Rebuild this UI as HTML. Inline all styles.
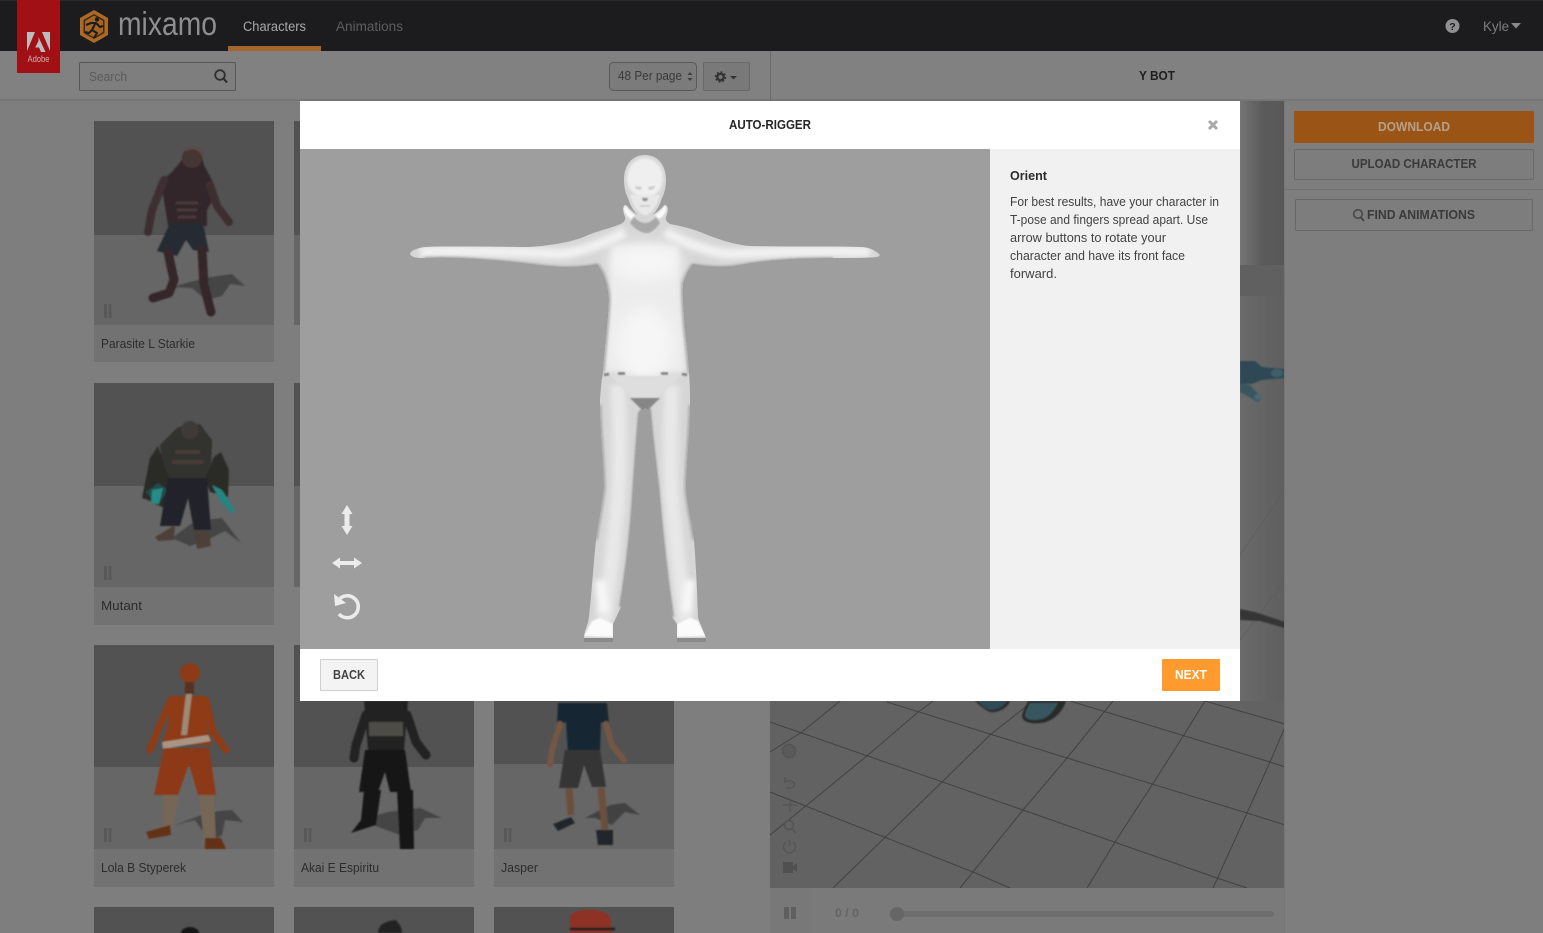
<!DOCTYPE html>
<html><head><meta charset="utf-8"><title>Mixamo Auto-Rigger</title>
<style>
html,body{margin:0;padding:0;width:1543px;height:933px;overflow:hidden;background:#808080}
svg{display:block;position:absolute;left:0;top:0}
text{font-family:"Liberation Sans",sans-serif}
</style></head><body>
<svg width="1543" height="933" viewBox="0 0 1543 933" xmlns="http://www.w3.org/2000/svg">
<defs>
<linearGradient id="vtop" gradientUnits="userSpaceOnUse" x1="1240" x2="1285" y1="0" y2="0"><stop offset="0" stop-color="#747474"/><stop offset=".5" stop-color="#5b5b5b"/><stop offset="1" stop-color="#585858"/></linearGradient>
<linearGradient id="vmid" gradientUnits="userSpaceOnUse" x1="1240" x2="1285" y1="0" y2="0"><stop offset="0" stop-color="#6a6a6a"/><stop offset="1" stop-color="#5e5e5e"/></linearGradient>
<filter id="b1" filterUnits="userSpaceOnUse" x="0" y="0" width="1543" height="933"><feGaussianBlur stdDeviation=".8"/></filter>
<filter id="b15" filterUnits="userSpaceOnUse" x="0" y="0" width="1543" height="933"><feGaussianBlur stdDeviation="1.4"/></filter>
<filter id="b2" filterUnits="userSpaceOnUse" x="0" y="0" width="1543" height="933"><feGaussianBlur stdDeviation="3"/></filter>
<filter id="b3" filterUnits="userSpaceOnUse" x="0" y="0" width="1543" height="933"><feGaussianBlur stdDeviation="8"/></filter>
<path id="bodyshape" d="M645 155C632 155 624 165 624 180C624 186 625 192 628 198C630 205 634 212 638 215C632 212 628 207 626 205C622 206 623 212 625 217C626 220 624 222 621 224C608 229 594 232 586 236C570 243 545 246 530 247C500 247 450 246 425 247C418 248 411 250 410 254C412 258 418 258 424 258C455 256 500 260 540 265C565 268 585 267 597 264C604 272 608 285 609 298C609 315 605 345 603 372C601 385 600 395 600 405C600 430 604 465 604 487C603 500 599 520 596 540C593 570 591 600 589 617C588 625 584 632 584 638V642H613V624L621 607C627 570 632 530 634 493C636 465 638 435 640 413L645 408L649 410C651 435 655 465 658 493C661 530 666 575 672 617L677 624V642H706V638C703 630 699 622 698 617C697 590 696 565 694 540C691 520 686 500 686 487C686 465 690 430 690 405C690 395 690 385 689 373C688 350 684 330 684 317C683 305 682 295 683 283C686 275 689 268 693 264C710 267 722 267 733 266C770 259 800 258 833 258C850 258 865 258 877 257C880 257 880 254 879 254C875 250 868 247 860 247C830 246 790 247 750 246C730 244 715 238 700 232C690 228 680 226 670 224C667 222 665 220 666 217C668 212 669 206 665 205C663 207 658 212 652 215C656 212 660 205 662 198C665 192 666 186 666 180C666 165 658 155 645 155Z"/>
<clipPath id="body"><use href="#bodyshape"/></clipPath>
</defs>

<!-- page -->
<rect width="1543" height="933" fill="#7e7e7e"/>

<!-- viewport -->
<rect x="770" y="101" width="515" height="832" fill="#626262"/>
<rect x="1240" y="101" width="45" height="165" fill="url(#vtop)"/>
<rect x="1240" y="265" width="45" height="31" fill="#606060"/>
<rect x="1240" y="296" width="45" height="405" fill="url(#vmid)"/>
<g stroke="#424242" stroke-width="1" fill="none">
<path d="M770 722L1023 810 1217 878 1247 888M770 792L973 872 1010 888M887 702L1067 758 1247 813 1285 825M1070 701L1270 762 1285 767M1205 701L1285 724"/>
<path d="M833 888L942 782 990 735 1033 701M960 888L1023 810 1067 758 1113 701M1087 888L1115 842 1152 785 1182 738 1205 701M1213 888L1247 813 1270 762 1285 727M770 835L807 805 868 755 917 713 933 701M770 752L802 732 840 701"/>
</g>
<g stroke="#5c5c5c" stroke-width="1" fill="none" opacity=".7"><path d="M1240 555L1285 490M1240 640L1285 580"/></g>
<path d="M1240 609L1255 612 1285 622V628L1260 621 1240 620Z" fill="#363636" filter="url(#b1)"/>
<g filter="url(#b1)">
<path d="M1240 361H1255L1262 367 1285 369V378L1262 380 1252 384 1240 384Z" fill="#2f4a55"/>
<path d="M1240 384L1250 385 1262 398 1258 402 1240 392Z" fill="#385460"/>
<ellipse cx="1277" cy="373" rx="6" ry="4" fill="#3f5e69"/>
<ellipse cx="1258" cy="397" rx="4" ry="3" fill="#4a6873"/>
<path d="M975 701H1010C1008 708 998 713 990 712 984 709 979 705 975 701Z" fill="#2c2c2c"/>
<path d="M978 701H1007C1004 707 996 710 990 710 985 708 981 705 978 701Z" fill="#2f4b56"/>
<path d="M1028 701H1066C1064 708 1058 718 1046 722 1035 725 1022 723 1022 716 1023 710 1026 706 1028 701Z" fill="#2c2c2c"/>
<path d="M1030 703H1058C1054 710 1050 716 1042 719 1034 721 1025 720 1025 715 1026 710 1028 707 1030 703Z" fill="#38565f"/>
</g>
<!-- viewport tool icons -->
<g fill="none" stroke="#555" stroke-width="1.8">
<circle cx="789" cy="751" r="6.5" fill="#5a5a5a"/>
<path d="M785 779V781H790C796 781 796 788 790 788H786M785 777V783" stroke-width="1.5"/>
<path d="M790 798V812M783 805H797" stroke-width="1.5"/>
<circle cx="789" cy="825" r="4.5"/><path d="M792 829L796 833"/>
<path d="M786 842A6 6 0 1 0 793 842M789.5 840V846" stroke-width="1.5"/>
</g>
<path d="M783 862H793V866L797 863V872L793 869V873H783Z" fill="#505050"/>
<!-- timeline bar -->
<rect x="770" y="888" width="515" height="45" fill="#7a7a7a"/>
<rect x="770" y="888" width="39" height="45" fill="#787878"/>
<rect x="784" y="907" width="5" height="12" fill="#5f5f5f"/><rect x="791" y="907" width="5" height="12" fill="#5f5f5f"/>
<text x="835" y="917" font-size="12" font-weight="bold" fill="#646464" textLength="24" lengthAdjust="spacingAndGlyphs">0 / 0</text>
<rect x="897" y="911" width="377" height="6" rx="3" fill="#6e6e6e"/>
<circle cx="897" cy="914" r="7" fill="#666"/>

<!-- right panel -->
<rect x="1285" y="101" width="258" height="832" fill="#7e7e7e"/>
<rect x="1284" y="101" width="1" height="832" fill="#757575"/>
<rect x="1294" y="111" width="240" height="32" rx="1" fill="#9a5516"/>
<text x="1414" y="131" font-size="13" font-weight="bold" fill="#b5a08b" text-anchor="middle" textLength="72" lengthAdjust="spacingAndGlyphs">DOWNLOAD</text>
<rect x="1294.500" y="149.500" width="239" height="30" rx="1" fill="#7d7d7d" stroke="#686868"/>
<text x="1414" y="168" font-size="13" font-weight="bold" fill="#3a3a3a" text-anchor="middle" textLength="125" lengthAdjust="spacingAndGlyphs">UPLOAD CHARACTER</text>
<rect x="1285" y="189" width="258" height="1" fill="#707070"/>
<rect x="1295.500" y="199.500" width="237" height="31" rx="1" fill="#7d7d7d" stroke="#686868"/>
<circle cx="1358" cy="214" r="4.300" fill="none" stroke="#454545" stroke-width="1.500"/><path d="M1361 217.500L1364 221" stroke="#454545" stroke-width="1.800"/>
<text x="1367" y="219" font-size="13" font-weight="bold" fill="#3a3a3a" textLength="108" lengthAdjust="spacingAndGlyphs">FIND ANIMATIONS</text>

<!-- sub header -->
<rect x="0" y="51" width="1543" height="50" fill="#818181"/>
<rect x="0" y="99" width="1543" height="2" fill="#767676"/>
<rect x="770" y="51" width="1" height="50" fill="#6d6d6d"/>
<rect x="79.500" y="62.500" width="156" height="28" rx="1" fill="#7e7e7e" stroke="#565656"/>
<text x="89" y="81" font-size="13" fill="#5a5a5a" textLength="38" lengthAdjust="spacingAndGlyphs">Search</text>
<circle cx="220" cy="75" r="4.800" fill="none" stroke="#2f2f2f" stroke-width="1.800"/><path d="M223.500 78.500L227 82.500" stroke="#2f2f2f" stroke-width="2.200"/>
<rect x="609.500" y="62.500" width="87" height="28" rx="4" fill="#7b7b7b" stroke="#5a5a5a"/>
<text x="618" y="80" font-size="13" fill="#3a3a3a" textLength="64" lengthAdjust="spacingAndGlyphs">48 Per page</text>
<path d="M687.500 75L690 72 692.500 75ZM687.500 78L690 81 692.500 78Z" fill="#3f3f3f"/>
<rect x="703.500" y="62.500" width="46" height="28" rx="1" fill="#797979" stroke="#686868"/>
<circle cx="720.500" cy="77" r="3.200" fill="none" stroke="#333" stroke-width="2.400"/>
<circle cx="720.500" cy="77" r="5" fill="none" stroke="#333" stroke-width="1.400" stroke-dasharray="2 1.900"/>
<path d="M730 76H737L733.500 79.500Z" fill="#333"/>
<text x="1157" y="80" font-size="12.5" font-weight="bold" fill="#1e1e1e" text-anchor="middle" textLength="36" lengthAdjust="spacingAndGlyphs">Y BOT</text>

<!-- top nav -->
<rect x="0" y="0" width="1543" height="51" fill="#1c1c1e"/>
<rect x="0" y="0" width="1543" height="1" fill="#2a2a2a"/>
<rect x="228" y="46" width="93" height="5" fill="#a5662c"/>
<text x="243" y="31" font-size="13.500" fill="#a8a8a8" textLength="63" lengthAdjust="spacingAndGlyphs">Characters</text>
<text x="336" y="31" font-size="13.500" fill="#5d5d5d" textLength="67" lengthAdjust="spacingAndGlyphs">Animations</text>
<!-- adobe -->
<rect x="17" y="0" width="43" height="73" fill="#a01015"/>
<path d="M27 32H35L27 51ZM50 32H42L50 51ZM38.500 37L45.500 52H41L39 47.500H35.200L38.500 41Z" fill="#bcbcbc"/>
<text x="38.500" y="62" font-size="9.500" fill="#d0b0b0" text-anchor="middle" textLength="22" lengthAdjust="spacingAndGlyphs">Adobe</text>
<!-- mixamo logo -->
<path d="M94 10L108 18V35L94 43 80 35V18Z" fill="#ae6a24"/>
<path d="M94 14L104.500 20V33L94 39 83.500 33V20Z" fill="#3a2a1a"/>
<path d="M94 15.500L103 21V32L94 37.500 85 32V21Z" fill="#a8651f"/>
<circle cx="97" cy="19.500" r="2.200" fill="#1c1c1e"/>
<path d="M86 25L91 23 96 23 100 27 103 26M95 24L92 30 97 33 94 38M92 30L89 33 85 32" fill="none" stroke="#1c1c1e" stroke-width="2.100" stroke-linejoin="round"/>
<text x="118" y="35" font-size="33" fill="#8e8e8e" textLength="99" lengthAdjust="spacingAndGlyphs">mixamo</text>
<!-- help/user -->
<circle cx="1452.500" cy="26" r="7" fill="#8f8f8f"/>
<text x="1452.500" y="30" font-size="10.500" font-weight="bold" fill="#1c1c1e" text-anchor="middle">?</text>
<text x="1483" y="31" font-size="13.500" fill="#7d7d7d" textLength="26" lengthAdjust="spacingAndGlyphs">Kyle</text>
<path d="M1511 23H1521L1516 28.500Z" fill="#8a8a8a"/>

<!-- cards -->
<g>
<g fill="#727272">
<rect x="94" y="325" width="180" height="37"/><rect x="94" y="587" width="180" height="38"/><rect x="94" y="849" width="180" height="38"/><rect x="294" y="849" width="180" height="38"/><rect x="494" y="849" width="180" height="38"/>
</g>
<g fill="#525252">
<rect x="94" y="121" width="180" height="114"/><rect x="294" y="121" width="10" height="114"/>
<rect x="94" y="383" width="180" height="103"/><rect x="294" y="383" width="10" height="103"/>
<rect x="94" y="645" width="180" height="122"/><rect x="294" y="645" width="180" height="122"/><rect x="494" y="645" width="180" height="119"/>
<rect x="94" y="907" width="180" height="26"/><rect x="294" y="907" width="180" height="26"/><rect x="494" y="907" width="180" height="26"/>
</g>
<g fill="#666">
<rect x="94" y="235" width="180" height="90"/><rect x="294" y="235" width="10" height="90"/>
<rect x="94" y="486" width="180" height="101"/><rect x="294" y="486" width="10" height="101"/>
<rect x="94" y="767" width="180" height="82"/><rect x="294" y="767" width="180" height="82"/><rect x="494" y="764" width="180" height="85"/>
</g>
<!-- small silhouettes -->
<g fill="#585858">
<rect x="104" y="304" width="3" height="14"/><rect x="108.500" y="304" width="3" height="14"/>
<rect x="104" y="566" width="3" height="14"/><rect x="108.500" y="566" width="3" height="14"/>
<rect x="104" y="828" width="3" height="14"/><rect x="108.500" y="828" width="3" height="14"/>
<rect x="304" y="828" width="3" height="14"/><rect x="308.500" y="828" width="3" height="14"/>
<rect x="504" y="828" width="3" height="14"/><rect x="508.500" y="828" width="3" height="14"/>
</g>
<g font-size="13" fill="#2c2c2c">
<text x="101" y="348" textLength="94" lengthAdjust="spacingAndGlyphs">Parasite L Starkie</text>
<text x="101" y="610" textLength="41" lengthAdjust="spacingAndGlyphs">Mutant</text>
<text x="101" y="872" textLength="85" lengthAdjust="spacingAndGlyphs">Lola B Styperek</text>
<text x="301" y="872" textLength="78" lengthAdjust="spacingAndGlyphs">Akai E Espiritu</text>
<text x="501" y="872" textLength="37" lengthAdjust="spacingAndGlyphs">Jasper</text>
</g>

<g filter="url(#b1)">
<!-- Parasite -->
<path d="M172 287L205 278 232 274 245 286 230 284 222 296 206 300 192 288Z" fill="#444"/>
<path d="M172 172L186 155 200 150 204 165 212 180 214 198 207 210 207 226 168 226 164 200 160 182Z" fill="#32272a"/>
<circle cx="192" cy="158" r="10" fill="#443436"/>
<path d="M186 150C192 146 200 148 203 155" stroke="#5e4a4a" stroke-width="3" fill="none"/>
<path d="M164 180L152 210 148 232M210 185L217 206 229 222" fill="none" stroke="#3e2e33" stroke-width="8" stroke-linecap="round" stroke-linejoin="round"/>
<path d="M170 223H203L209 252 193 250 186 240 177 256 157 251Z" fill="#272c30"/>
<path d="M168 252L174 280 169 293 153 298M202 250L204 285 211 312" fill="none" stroke="#36272c" stroke-width="9" stroke-linecap="round" stroke-linejoin="round"/>
<path d="M176 203H198M177 210H197M178 217H196" stroke="#4e3a3c" stroke-width="2.500"/>
<!-- Mutant -->
<path d="M172 538L195 521 222 518 241 543 225 531 205 541 190 546Z" fill="#454545"/>
<path d="M160 445L178 427 200 424 212 440 211 470 207 482H168L162 470Z" fill="#33302d"/>
<circle cx="190" cy="430" r="9" fill="#3e3b39"/>
<path d="M142 498L150 458 158 446 163 462 170 480 164 508 148 500Z" fill="#2b2927"/>
<path d="M205 480L214 457 221 452 229 470 228 497 210 492Z" fill="#2b2927"/>
<path d="M146 492L158 483 168 490 157 506Z" fill="#234c4c"/>
<path d="M152 490L163 488 159 504 151 503Z" fill="#278c87"/>
<path d="M212 485L222 490 235 510 232 514 220 501Z" fill="#268480"/>
<path d="M168 478H207L211 530H194L188 498 180 526H160Z" fill="#20242a"/>
<path d="M155 537L175 525 174 540 158 541ZM194 532H209L211 546 197 549Z" fill="#4e4139"/>
<path d="M172 462H203M175 452H200" stroke="#463b36" stroke-width="4"/>
<!-- Lola -->
<path d="M175 825L210 812 232 810 243 822 225 820 222 835 210 842 195 820Z" fill="#444"/>
<circle cx="190" cy="673" r="10" fill="#8c3a18"/>
<rect x="185" y="682" width="9" height="12" fill="#553124"/>
<path d="M170 696H205L208 730 212 745H162L168 725Z" fill="#8f3b16"/>
<path d="M186 694H192L187 735H181Z" fill="#9c8a76"/>
<path d="M162 742L208 735 211 741 163 749Z" fill="#a89684"/>
<path d="M171 700L157 732 150 750M206 700L213 732 226 750" fill="none" stroke="#8f3b16" stroke-width="7" stroke-linecap="round" stroke-linejoin="round"/>
<path d="M164 748H209L216 795H198L189 764 178 795H154Z" fill="#8d3914"/>
<path d="M163 795H179L173 827H163ZM199 795H214L216 842H204Z" fill="#766657"/>
<path d="M146 832L170 825 171 835 149 839ZM205 838H221L226 849H205Z" fill="#643017"/>
<!-- Akai -->
<path d="M360 820L388 812 420 808 442 818 425 818 418 830 400 835Z" fill="#444"/>
<path d="M364 701H408L404 750H368Z" fill="#242220"/>
<rect x="369" y="722" width="34" height="14" fill="#4e4d44"/>
<path d="M366 715L356 745 354 758M407 715L416 742 426 755" fill="none" stroke="#202020" stroke-width="9" stroke-linecap="round" stroke-linejoin="round"/>
<path d="M365 750H405L411 792H390L385 772 378 792H359Z" fill="#181818"/>
<path d="M364 790H381L376 825 351 833 361 820ZM397 790H413L414 849H400Z" fill="#151515"/>
<!-- Jasper -->
<path d="M585 818L610 805 625 803 640 815 625 812 612 825 595 818Z" fill="#424242"/>
<path d="M558 703H607L609 725 601 722 600 752H568L566 722 557 725Z" fill="#182532"/>
<path d="M560 724L552 750 550 765M606 724L612 745 624 760" fill="none" stroke="#745644" stroke-width="6" stroke-linecap="round" stroke-linejoin="round"/>
<path d="M565 750H600L606 787H592L584 765 578 788H559Z" fill="#353535"/>
<path d="M569 788L571 815M601 788L605 830" stroke="#6b4f3e" stroke-width="7"/>
<path d="M553 824L571 817 575 823 558 831ZM596 830H613L613 845H598Z" fill="#21272b"/>
<!-- row 4 -->
<ellipse cx="190" cy="933" rx="9" ry="6" fill="#151515"/>
<path d="M378 933C378 925 385 921 396 920 400 925 402 928 402 933Z" fill="#232323"/>
<path d="M570 933V916C575 908 600 907 610 916L612 933Z" fill="#8e3127"/>
<path d="M570 929H615" stroke="#232323" stroke-width="3"/>
</g>
</g>

<!-- modal -->
<rect x="300" y="101" width="940" height="600" fill="#fff"/>
<rect x="300" y="149" width="690" height="500" fill="#9e9e9e"/>
<rect x="990" y="149" width="250" height="500" fill="#f1f1f1"/>
<text x="770" y="129" font-size="12.5" font-weight="bold" fill="#262626" text-anchor="middle" textLength="82" lengthAdjust="spacingAndGlyphs">AUTO-RIGGER</text>
<path d="M1209 121L1217 129M1217 121L1209 129" stroke="#aaa" stroke-width="3"/>
<text x="1010" y="180" font-size="13" font-weight="bold" fill="#2c2c2c" textLength="37" lengthAdjust="spacingAndGlyphs">Orient</text>
<g font-size="13" fill="#424242">
<text x="1010" y="206" textLength="209" lengthAdjust="spacingAndGlyphs">For best results, have your character in</text>
<text x="1010" y="224" textLength="198" lengthAdjust="spacingAndGlyphs">T-pose and fingers spread apart. Use</text>
<text x="1010" y="242" textLength="156" lengthAdjust="spacingAndGlyphs">arrow buttons to rotate your</text>
<text x="1010" y="260" textLength="175" lengthAdjust="spacingAndGlyphs">character and have its front face</text>
<text x="1010" y="278" textLength="47" lengthAdjust="spacingAndGlyphs">forward.</text>
</g>
<!-- figure -->
<g clip-path="url(#body)">
<rect x="400" y="150" width="490" height="500" fill="#d6d6d6"/>
<!-- torso and arm highlights -->
<path d="M612 245H678L682 300 686 372H604L608 300Z" fill="#ececec" filter="url(#b2)"/>
<ellipse cx="645" cy="345" rx="28" ry="38" fill="#f6f6f6" filter="url(#b3)"/>
<ellipse cx="645" cy="262" rx="36" ry="18" fill="#f6f6f6" filter="url(#b3)"/>
<path d="M420 252C470 250 520 252 560 254 585 252 610 240 625 232M870 252C820 250 770 252 730 254 705 252 680 240 665 232" fill="none" stroke="#f2f2f2" stroke-width="10" filter="url(#b2)"/>
<!-- leg highlights -->
<path d="M618 385C620 430 620 470 618 500 614 550 608 590 604 625" fill="none" stroke="#e8e8e8" stroke-width="15" filter="url(#b2)"/>
<path d="M672 385C670 430 670 470 672 500 676 550 682 590 686 625" fill="none" stroke="#e8e8e8" stroke-width="15" filter="url(#b2)"/>
<path d="M604 612L600 580M686 612L690 580" stroke="#f8f8f8" stroke-width="10" filter="url(#b2)"/>
<!-- dark edges -->
<g filter="url(#b15)" fill="none" stroke="#858585" stroke-width="3">
<path d="M634 493C636 465 638 435 640 413L645 408L649 410C651 435 655 465 658 493C661 530 666 575 672 617"/>
<path d="M621 607C627 570 632 530 634 493"/>
<path d="M597 264C604 272 608 285 609 298C609 315 605 345 603 372" stroke="#a8a8a8"/>
<path d="M693 264C689 268 686 275 683 283C682 295 683 305 684 317C684 330 688 350 689 373" stroke="#a8a8a8"/>
<path d="M600 405C600 430 604 465 604 487C603 500 599 520 596 540" stroke="#a5a5a5"/>
<path d="M690 405C690 430 686 465 686 487C686 500 691 520 694 540" stroke="#a5a5a5"/>
<path d="M424 259C455 257 500 261 540 266C565 269 585 268 597 265M693 265C710 268 722 268 733 267C770 260 800 259 833 259" stroke="#9a9a9a" stroke-width="3"/>
</g>
<!-- head -->
<ellipse cx="645" cy="178" rx="18" ry="20" fill="#efefef" filter="url(#b15)"/>
<path d="M630 195C634 208 640 215 645 215 650 215 656 208 660 195Z" fill="#e8e8e8" filter="url(#b1)"/>
<!-- shoes -->
<path d="M584 636L592 621 600 618 613 624V637ZM706 636L698 621 690 618 677 624V637Z" fill="#fbfbfb" filter="url(#b1)"/>
<path d="M584 638H613V642H584ZM677 638H706V642H677Z" fill="#8a8a8a"/>
<!-- pelvis -->
<path d="M611 376H680L664 392 656 399H634L626 392Z" fill="#dedede" filter="url(#b1)"/>
<path d="M630 398H660L650 408 645 412 640 408Z" fill="#868686" filter="url(#b1)"/>
</g>
<!-- head overlay / neck -->
<g filter="url(#b1)">
<path d="M625 205C622 209 625 215 631 219L635 215C631 213 628 209 625 205ZM665 205C668 209 665 215 659 219L655 215C659 213 662 209 665 205Z" fill="#fafafa"/>
<path d="M634 217C638 221 641 223 645 223 649 223 652 221 656 217L660 223C656 229 651 233 647 233 642 233 636 230 630 223Z" fill="#a8a8a8"/>
<path d="M635 186L642 187 641 190 636 189ZM655 186L648 187 649 190 654 189Z" fill="#cccccc"/>
<path d="M642 198H648L647 201H643Z" fill="#8f8f8f"/>
<path d="M640 206H650" stroke="#bbb" stroke-width="1"/>
<path d="M618 373.500L625 373.500M661 373.500L668 373.500M604 375L609 374M682 374L687 375" stroke="#7d7d7d" stroke-width="2.500"/>
</g>
<!-- rotation controls -->
<g fill="#ececec">
<path d="M347 505L352.500 514H349.500V526H352.500L347 535 341.500 526H344.500V514H341.500Z"/>
<path d="M332 563L340 557.500V561H354V557.500L362 563 354 568.500V565H340V568.500Z"/>
</g>
<path d="M340 598.500A11 11 0 1 1 339 614" fill="none" stroke="#ececec" stroke-width="3.600"/>
<path d="M334 594L335 606 346 603Z" fill="#ececec"/>
<!-- buttons -->
<rect x="320.500" y="659.500" width="57" height="31" rx="1" fill="#f3f3f3" stroke="#cfcfcf"/>
<text x="349" y="679" font-size="13" font-weight="bold" fill="#444" text-anchor="middle" textLength="32" lengthAdjust="spacingAndGlyphs">BACK</text>
<rect x="1162" y="659" width="58" height="32" rx="1" fill="#ff9a2e"/>
<text x="1191" y="679" font-size="13" font-weight="bold" fill="#fff" text-anchor="middle" textLength="32" lengthAdjust="spacingAndGlyphs">NEXT</text>
</svg>
</body></html>
